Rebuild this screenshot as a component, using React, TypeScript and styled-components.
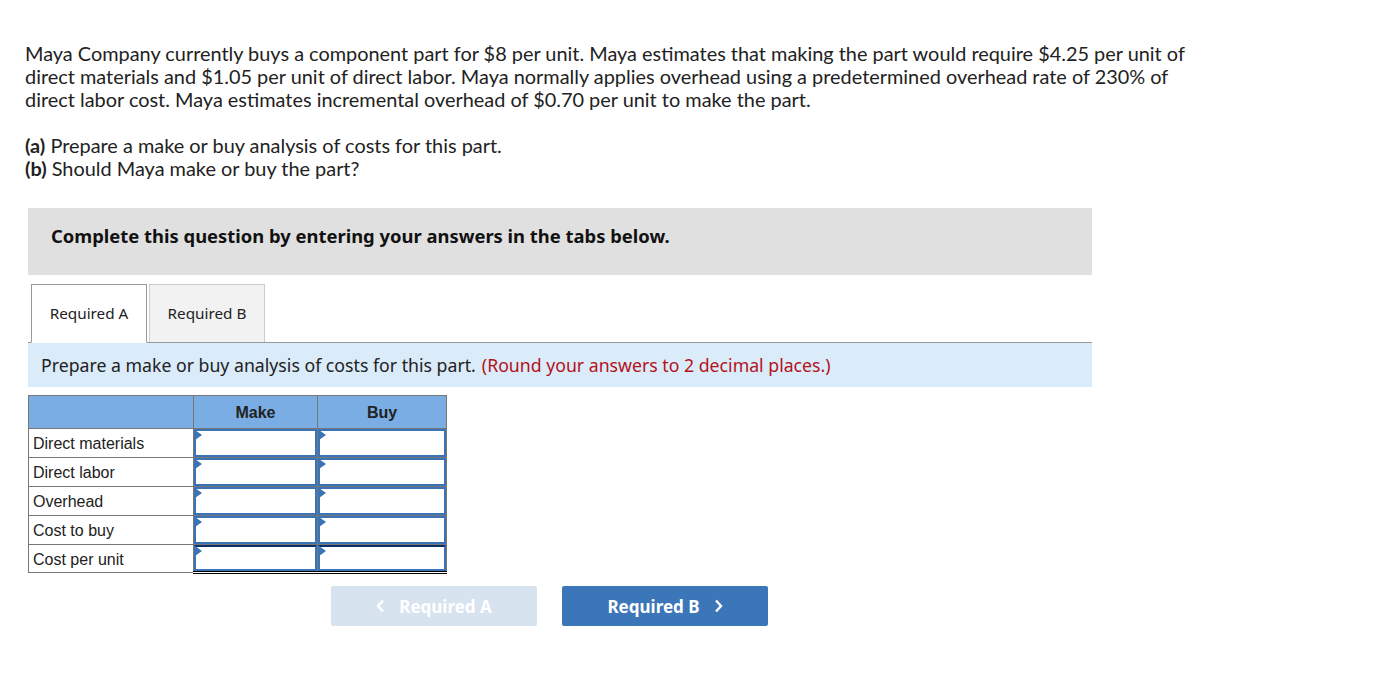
import React from 'react';
import styled, { createGlobalStyle } from 'styled-components';

const GlobalStyle = createGlobalStyle`
    html, body {
        margin: 0;
        padding: 0;
        background: #fff;
    }
`;

const Page = styled.div`
    padding: 42px 0 0 25px;
    width: 1370px;
    height: 653px;
    box-sizing: border-box;
`;

const Question = styled.div`
    font-family: 'Lato', 'Open Sans', sans-serif;
    font-size: 19.9px;
    line-height: 23px;
    color: #222;
    width: 1175px;
`;

const Para = styled.p`
    margin: 0 0 23px 0;
`;

const Part = styled.div``;

const PartLabel = styled.b`
    font-weight: 700;
`;

const Workarea = styled.div`
    margin: 28px 0 0 3px;
    width: 1064px;
    font-family: 'Noto Sans', 'DejaVu Sans', sans-serif;
`;

const Banner = styled.div`
    background: #e0e0e0;
    height: 67px;
    padding: 15px 0 0 23px;
    box-sizing: border-box;
    font-size: 18.4px;
    font-weight: 700;
    color: #111;
`;

const TabRow = styled.div`
    display: flex;
    gap: 2px;
    margin-top: 9px;
    padding-left: 3px;
    border-bottom: 1px solid #999;
    height: 58px;
`;

const Tab = styled.div<{ $active?: boolean }>`
    width: 116px;
    box-sizing: border-box;
    border: 1px solid ${p => (p.$active ? '#999' : '#ccc')};
    border-bottom: ${p => (p.$active ? '1px solid #fff' : 'none')};
    background: ${p => (p.$active ? '#fff' : '#f2f2f2')};
    display: flex;
    align-items: center;
    justify-content: center;
    padding-bottom: 2px;
    font-size: 15.3px;
    color: #222;
    height: ${p => (p.$active ? '59px' : '58px')};
    position: relative;
    z-index: 1;
`;

const Instruction = styled.div`
    background: #daebf9;
    height: 44px;
    display: flex;
    align-items: center;
    padding-left: 13px;
    font-size: 17.7px;
    color: #222;
`;

const Hint = styled.span`
    color: #b5121b;
    margin-left: 6px;
`;

const Table = styled.table`
    margin-top: 8px;
    border-collapse: collapse;
    font-family: 'Liberation Sans', Arial, sans-serif;
    font-size: 16px;
    color: #222;
`;

const HeadCell = styled.th<{ $w: number }>`
    background: #7aade4;
    border: 1px solid #777;
    width: ${p => p.$w}px;
    height: 33px;
    padding: 0;
    font-weight: 700;
    vertical-align: top;
    padding-top: 8px;
    box-sizing: border-box;
`;

const LabelCell = styled.td`
    border: 1px solid #777;
    height: 28px;
    padding: 2px 0 0 4px;
    box-sizing: border-box;
`;

const InputCell = styled.td<{ $last?: boolean }>`
    padding: 0;
    height: 28px;
    border: 1px solid #777;
    border-bottom: ${p => (p.$last ? '3px double #000' : '1px solid #777')};
    position: relative;
    box-sizing: border-box;
`;

const InputBox = styled.div<{ $last?: boolean }>`
    height: ${p => (p.$last ? '26px' : '28px')};
    box-sizing: border-box;
    border: 2px solid #3a73b8;
    border-top-color: ${p => (p.$last ? '#0b2f66' : '#3a73b8')};
    background: #fff;
`;

const Flag = styled.span`
    position: absolute;
    top: 1px;
    left: 1px;
    width: 0;
    height: 0;
    border-top: 5px solid transparent;
    border-bottom: 5px solid transparent;
    border-left: 7px solid #3a73b8;
`;

const NavRow = styled.div`
    display: flex;
    gap: 25px;
    margin: 12px 0 0 303px;
`;

const NavButton = styled.div<{ $disabled?: boolean }>`
    width: 206px;
    height: 40px;
    border-radius: 2px;
    background: ${p => (p.$disabled ? '#d8e3f0' : '#3a76b8')};
    color: #fff;
    font-family: 'Noto Sans', 'DejaVu Sans', sans-serif;
    font-weight: 700;
    font-size: 17px;
    display: flex;
    align-items: center;
    justify-content: center;
    gap: 14px;
`;

const Chevron = ({ dir }: { dir: 'left' | 'right' }) => (
    <svg width="9" height="14" viewBox="0 0 9 14">
        <path
            d={dir === 'left' ? 'M7 1.5 L2 7 L7 12.5' : 'M2 1.5 L7 7 L2 12.5'}
            fill="none"
            stroke="#fff"
            strokeWidth="2.4"
        />
    </svg>
);

const rows = ['Direct materials', 'Direct labor', 'Overhead', 'Cost to buy', 'Cost per unit'];

export default function App() {
    return (
        <>
            <GlobalStyle />
            <Page>
                <Question>
                    <Para>
                        Maya Company currently buys a component part for $8 per unit. Maya estimates that making the
                        part would require $4.25 per unit of direct materials and $1.05 per unit of direct labor. Maya
                        normally applies overhead using a predetermined overhead rate of 230% of direct labor cost.
                        Maya estimates incremental overhead of $0.70 per unit to make the part.
                    </Para>
                    <Part>
                        <PartLabel>(a)</PartLabel> Prepare a make or buy analysis of costs for this part.
                    </Part>
                    <Part>
                        <PartLabel>(b)</PartLabel> Should Maya make or buy the part?
                    </Part>
                </Question>
                <Workarea>
                    <Banner>Complete this question by entering your answers in the tabs below.</Banner>
                    <TabRow>
                        <Tab $active>Required A</Tab>
                        <Tab>Required B</Tab>
                    </TabRow>
                    <Instruction>
                        Prepare a make or buy analysis of costs for this part.
                        <Hint>(Round your answers to 2 decimal places.)</Hint>
                    </Instruction>
                    <Table>
                        <thead>
                            <tr>
                                <HeadCell $w={165} />
                                <HeadCell $w={124}>Make</HeadCell>
                                <HeadCell $w={129}>Buy</HeadCell>
                            </tr>
                        </thead>
                        <tbody>
                            {rows.map((r, i) => {
                                const last = i === rows.length - 1;
                                return (
                                    <tr key={r}>
                                        <LabelCell>{r}</LabelCell>
                                        <InputCell $last={last}>
                                            <InputBox $last={last} />
                                            <Flag />
                                        </InputCell>
                                        <InputCell $last={last}>
                                            <InputBox $last={last} />
                                            <Flag />
                                        </InputCell>
                                    </tr>
                                );
                            })}
                        </tbody>
                    </Table>
                    <NavRow>
                        <NavButton $disabled>
                            <Chevron dir="left" />
                            Required A
                        </NavButton>
                        <NavButton>
                            Required B
                            <Chevron dir="right" />
                        </NavButton>
                    </NavRow>
                </Workarea>
            </Page>
        </>
    );
}
